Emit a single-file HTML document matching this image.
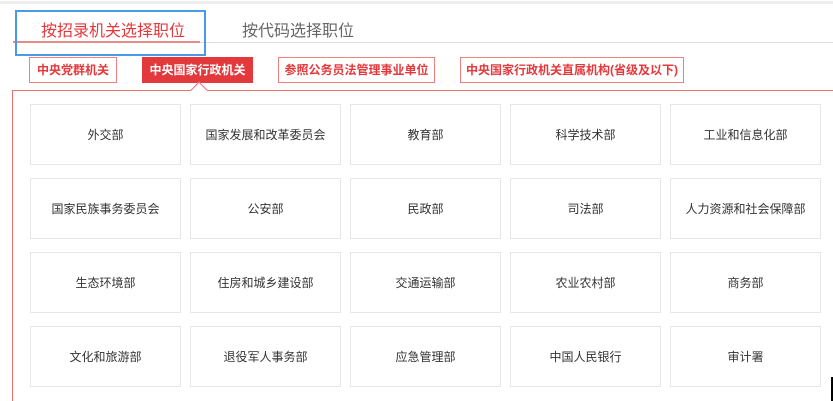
<!DOCTYPE html>
<html><head><meta charset="utf-8"><style>
body{margin:0;width:833px;height:401px;background:#fff;position:relative;overflow:hidden;font-family:"Liberation Sans","Noto Sans CJK SC",sans-serif}
.a{position:absolute}
.btn{position:absolute;top:57px;height:24px;border:1px solid #f08080;color:#e4393c;font-size:12px;font-weight:bold;line-height:24px;text-align:center;box-sizing:border-box;height:26px}
.c{position:absolute;width:151px;height:61px;border:1px solid #e6e6e6;box-sizing:border-box;font-size:12px;color:#333;display:flex;align-items:center;justify-content:center}
</style></head><body>
<div class="a" style="left:0;top:1px;width:833px;height:3px;background:#eee"></div>
<div class="a" style="left:13px;top:42px;width:820px;height:1px;background:#ddd"></div>
<div class="a" style="left:13px;top:41px;width:187px;height:2px;background:#e98a8a"></div>
<div class="a" style="left:15px;top:10px;width:187px;height:42px;border:2px solid #4a9be6"></div>
<div class="a" style="left:41px;top:17px;font-size:16px;color:#e4393c">按招录机关选择职位</div>
<div class="a" style="left:242px;top:17px;font-size:16px;color:#666">按代码选择职位</div>
<div class="btn" style="left:29px;width:88px">中央党群机关</div>
<div class="btn" style="left:142px;width:111px;background:#e4393c;border-color:#e4393c;color:#fff">中央国家行政机关</div>
<div class="btn" style="left:278px;width:157px">参照公务员法管理事业单位</div>
<div class="btn" style="left:460px;width:224px">中央国家行政机关直属机构(省级及以下)</div>
<div class="a" style="left:12px;top:90px;width:821px;height:1px;background:#ee7070"></div>
<div class="a" style="left:12px;top:90px;width:1px;height:311px;background:#ee7070"></div>
<div class="a" style="left:193px;top:84px;width:11px;height:11px;background:#fff;border-left:1px solid #ee7070;border-top:1px solid #ee7070;transform:rotate(45deg)"></div>
<div class="a" style="left:190px;top:91px;width:26px;height:6px;background:#fff"></div>
<div class="a" style="left:831px;top:377px;width:2px;height:24px;background:#000"></div>
<div class="c" style="left:30px;top:104px">外交部</div>
<div class="c" style="left:190px;top:104px">国家发展和改革委员会</div>
<div class="c" style="left:350px;top:104px">教育部</div>
<div class="c" style="left:510px;top:104px">科学技术部</div>
<div class="c" style="left:670px;top:104px">工业和信息化部</div>
<div class="c" style="left:30px;top:178px">国家民族事务委员会</div>
<div class="c" style="left:190px;top:178px">公安部</div>
<div class="c" style="left:350px;top:178px">民政部</div>
<div class="c" style="left:510px;top:178px">司法部</div>
<div class="c" style="left:670px;top:178px">人力资源和社会保障部</div>
<div class="c" style="left:30px;top:252px">生态环境部</div>
<div class="c" style="left:190px;top:252px">住房和城乡建设部</div>
<div class="c" style="left:350px;top:252px">交通运输部</div>
<div class="c" style="left:510px;top:252px">农业农村部</div>
<div class="c" style="left:670px;top:252px">商务部</div>
<div class="c" style="left:30px;top:326px">文化和旅游部</div>
<div class="c" style="left:190px;top:326px">退役军人事务部</div>
<div class="c" style="left:350px;top:326px">应急管理部</div>
<div class="c" style="left:510px;top:326px">中国人民银行</div>
<div class="c" style="left:670px;top:326px">审计署</div>
</body></html>
